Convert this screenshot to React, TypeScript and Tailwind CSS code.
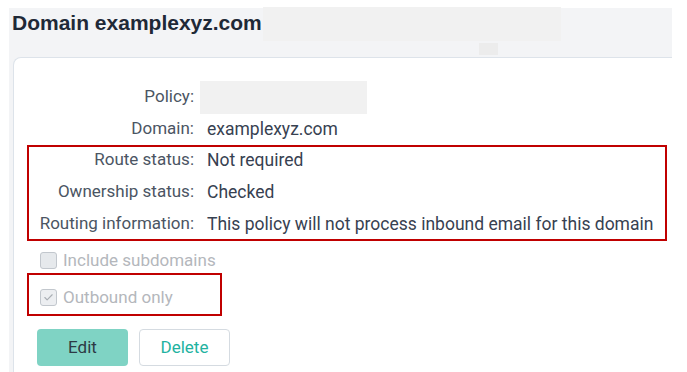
import { Check } from 'lucide-react';

const rows = [
  { label: 'Domain:', value: 'examplexyz.com', h: 'h-[30px]' },
  { label: 'Route status:', value: 'Not required', h: 'h-[32px]' },
  { label: 'Ownership status:', value: 'Checked', h: 'h-[32px]' },
  { label: 'Routing information:', value: 'This policy will not process inbound email for this domain', h: 'h-[32px]' },
];

export default function App() {
  return (
    <div className="w-[687px] h-[372px] overflow-hidden bg-white pt-2 pl-[9px] font-['Roboto',sans-serif]">
      <div className="relative w-[663px] h-[364px] bg-[#f3f4f6]">
        {/* Header */}
        <div className="flex items-center h-[49px] pl-[3px]">
          <h1 className="text-[21px] leading-none font-bold text-[#1f2937] font-['Liberation_Sans',sans-serif] -mt-[20px]">
            Domain examplexyz.com
          </h1>
        </div>
        {/* redacted blocks */}
        <div className="absolute left-[254px] -top-[1px] w-[298px] h-[34px] bg-[#f1f1f1]" />
        <div className="absolute left-[470px] top-[35px] w-[19px] h-[12px] bg-[#ececec]" />

        {/* Card */}
        <div className="relative ml-1 w-[659px] h-[315px] bg-white border-l border-t border-[#dde3ea] rounded-tl-lg pt-[22px]">
          <div className="flex items-center h-[34px]">
            <span className="w-[180px] text-right text-[17px] text-[#4b5563]">Policy:</span>
            <span className="ml-[6px] w-[167px] h-[33px] bg-[#f1f1f1]" />
          </div>
          {rows.map((r) => (
            <div key={r.label} className={`flex items-center ${r.h}`}>
              <span className="w-[180px] text-right text-[17px] text-[#4b5563] whitespace-nowrap">{r.label}</span>
              <span className="ml-[13px] text-[17.5px] text-[#374151] whitespace-nowrap">{r.value}</span>
            </div>
          ))}

          <div className="flex flex-col gap-[14px] mt-[9px] pl-[26px]">
            <label className="flex items-center gap-[6px] h-[23px] text-[17px] text-[#b4b7bc]">
              <span className="w-[17px] h-[17px] rounded-[3px] border border-[#c2c7cd] bg-[#e6e9ec]" />
              Include subdomains
            </label>
            <label className="flex items-center gap-[6px] h-[23px] text-[17px] text-[#b4b7bc]">
              <span className="w-[17px] h-[17px] rounded-[3px] border border-[#c2c7cd] bg-[#eceef1] flex items-center justify-center">
                <Check className="w-[11px] h-[11px] text-[#a9aeb4]" strokeWidth={2.5} />
              </span>
              Outbound only
            </label>
          </div>

          <div className="flex gap-[11px] mt-[20px] pl-[23px]">
            <button className="w-[91px] h-[37px] rounded-[4px] bg-[#7fd3c4] text-[17px] text-[#2d3a45]">Edit</button>
            <button className="w-[91px] h-[37px] rounded-[4px] bg-white border border-[#d5dbe1] text-[17px] text-[#22b2a0]">Delete</button>
          </div>

          {/* annotation boxes */}
          <div className="absolute left-[13px] top-[87px] w-[640px] h-[96px] border-2 border-[#c00000]" />
          <div className="absolute left-[13px] top-[215px] w-[195px] h-[43px] border-2 border-[#c00000]" />
        </div>
      </div>
    </div>
  );
}
